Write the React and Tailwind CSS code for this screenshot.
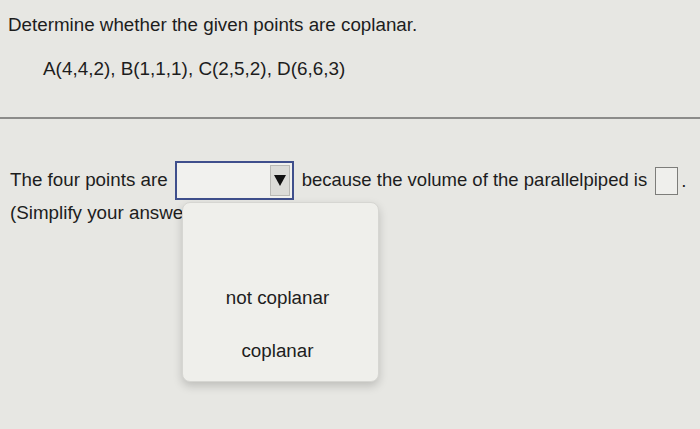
import React from 'react'

export default function App() {
    return (
        <div className="w-[700px] h-[429px] overflow-hidden bg-[#e7e7e3] text-[#1d1d1d] relative" style={{ fontFamily: '"Liberation Sans", Arial, sans-serif' }}>
            <div className="pt-[13px] pl-[8px] text-[18.8px] leading-[24px]">Determine whether the given points are coplanar.</div>
            <div className="pt-[20px] pl-[43px] text-[18.9px] leading-[24px]">A(4,4,2), B(1,1,1), C(2,5,2), D(6,6,3)</div>
            <div className="mt-[36px] h-[2px] bg-[#8c8c8a]"></div>

            <div className="pt-[41px] pl-[10px] text-[18.8px]">
                <div className="flex items-center h-[40px]">
                    <span>The four points are</span>
                    <div className="ml-[7px] w-[119px] h-[39px] border-2 border-[#3f4f8c] bg-[#f1f1ee] flex justify-end items-center pr-[2px]">
                        <div className="w-[20px] h-[31px] bg-[#dcdcd8] border border-[#b9b9b5] flex items-center justify-center">
                            <svg width="12" height="11" viewBox="0 0 12 11"><polygon points="0,0 12,0 6,11" fill="#111" /></svg>
                        </div>
                    </div>
                    <span className="ml-[8px] text-[18.5px]">because the volume of the parallelpiped is</span>
                    <div className="ml-[8px] w-[23px] h-[28px] border border-[#7d7d7a] bg-[#efefec] mt-[2px]"></div>
                    <span className="ml-[3px] mt-[2px]">.</span>
                </div>
                <div className="mt-[1px] leading-[24px]">(Simplify your answer.)</div>
            </div>

            <div className="absolute left-[182px] top-[202px] w-[197px] h-[180px] rounded-[8px] bg-[#efefeb] border border-[#d6d6d2] shadow-[0_4px_10px_rgba(0,0,0,0.18)] flex flex-col items-center text-[18.8px]">
                <div className="mt-[81px] -ml-[6px]">not coplanar</div>
                <div className="mt-[25px] -ml-[6px]">coplanar</div>
            </div>
        </div>
    )
}
